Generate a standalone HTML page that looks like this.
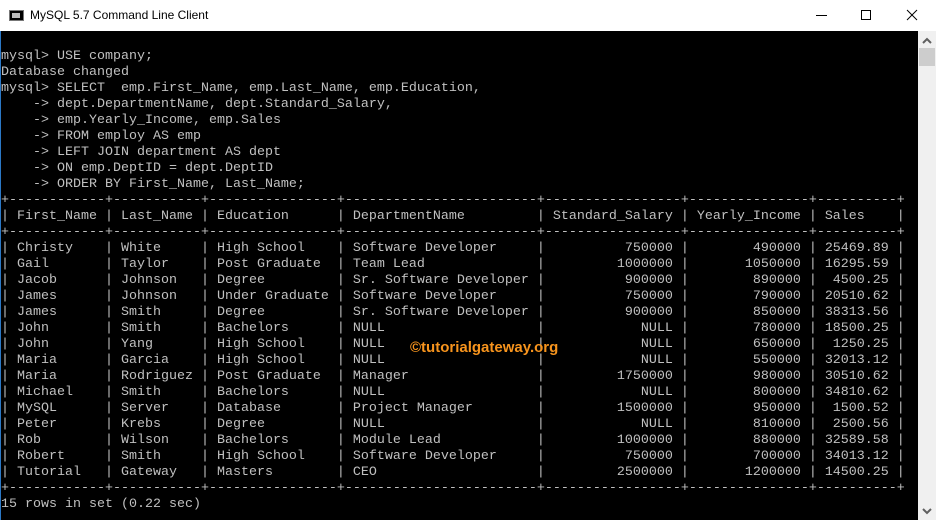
<!DOCTYPE html>
<html><head><meta charset="utf-8"><style>
html,body{margin:0;padding:0;width:936px;height:520px;overflow:hidden;background:#000;}
#title{position:absolute;left:0;top:0;width:936px;height:31px;background:#fff;font-family:"Liberation Sans",sans-serif;font-size:12px;color:#000;}
#title .t{position:absolute;left:30px;top:8px;}
#icon{position:absolute;left:9px;top:10px;width:15px;height:11px;background:#000;border:1px solid #777;box-sizing:border-box;}
#icon span{position:absolute;left:2px;top:2px;width:8px;height:5px;background:#bbb;}
#term{position:absolute;left:0;top:31px;width:918px;height:489px;background:#000;border-left:1px solid #2b78c6;box-sizing:border-box;}
pre{position:absolute;left:1px;top:49px;margin:0;font-family:"Liberation Mono",monospace;font-size:13.33px;line-height:16px;color:#c0c0c0;}
#sb{position:absolute;left:918px;top:31px;width:18px;height:489px;background:#f0f0f0;}
#thumb{position:absolute;left:919px;top:48px;width:16px;height:18px;background:#cdcdcd;}
#wm{position:absolute;left:410px;top:339px;font-family:"Liberation Sans",sans-serif;font-weight:bold;font-size:15px;color:#f7941d;}
</style></head><body>
<div id="title"><div id="icon"><span></span></div><div class="t">MySQL 5.7 Command Line Client</div>
<svg style="position:absolute;left:780px;top:0" width="156" height="31">
<line x1="36" y1="15.5" x2="47" y2="15.5" stroke="#000" stroke-width="1"/>
<rect x="81.5" y="10.5" width="9" height="9" fill="none" stroke="#000"/>
<line x1="127" y1="10" x2="137" y2="20" stroke="#000"/><line x1="137" y1="10" x2="127" y2="20" stroke="#000"/>
</svg></div>
<div id="term"></div>
<div id="sb"></div><div id="thumb"></div>
<svg style="position:absolute;left:918px;top:31px" width="18" height="489">
<path d="M5 12 L9 8 L13 12" fill="none" stroke="#606060" stroke-width="2"/>
<path d="M5 478 L9 482 L13 478" fill="none" stroke="#606060" stroke-width="2"/>
</svg>
<pre>mysql&gt; USE company;
Database changed
mysql&gt; SELECT  emp.First_Name, emp.Last_Name, emp.Education,
    -&gt; dept.DepartmentName, dept.Standard_Salary,
    -&gt; emp.Yearly_Income, emp.Sales
    -&gt; FROM employ AS emp
    -&gt; LEFT JOIN department AS dept
    -&gt; ON emp.DeptID = dept.DeptID
    -&gt; ORDER BY First_Name, Last_Name;
+------------+-----------+----------------+------------------------+-----------------+---------------+----------+
| First_Name | Last_Name | Education      | DepartmentName         | Standard_Salary | Yearly_Income | Sales    |
+------------+-----------+----------------+------------------------+-----------------+---------------+----------+
| Christy    | White     | High School    | Software Developer     |          750000 |        490000 | 25469.89 |
| Gail       | Taylor    | Post Graduate  | Team Lead              |         1000000 |       1050000 | 16295.59 |
| Jacob      | Johnson   | Degree         | Sr. Software Developer |          900000 |        890000 |  4500.25 |
| James      | Johnson   | Under Graduate | Software Developer     |          750000 |        790000 | 20510.62 |
| James      | Smith     | Degree         | Sr. Software Developer |          900000 |        850000 | 38313.56 |
| John       | Smith     | Bachelors      | NULL                   |            NULL |        780000 | 18500.25 |
| John       | Yang      | High School    | NULL                   |            NULL |        650000 |  1250.25 |
| Maria      | Garcia    | High School    | NULL                   |            NULL |        550000 | 32013.12 |
| Maria      | Rodriguez | Post Graduate  | Manager                |         1750000 |        980000 | 30510.62 |
| Michael    | Smith     | Bachelors      | NULL                   |            NULL |        800000 | 34810.62 |
| MySQL      | Server    | Database       | Project Manager        |         1500000 |        950000 |  1500.52 |
| Peter      | Krebs     | Degree         | NULL                   |            NULL |        810000 |  2500.56 |
| Rob        | Wilson    | Bachelors      | Module Lead            |         1000000 |        880000 | 32589.58 |
| Robert     | Smith     | High School    | Software Developer     |          750000 |        700000 | 34013.12 |
| Tutorial   | Gateway   | Masters        | CEO                    |         2500000 |       1200000 | 14500.25 |
+------------+-----------+----------------+------------------------+-----------------+---------------+----------+
15 rows in set (0.22 sec)</pre>
<div id="wm">©tutorialgateway.org</div>
</body></html>
